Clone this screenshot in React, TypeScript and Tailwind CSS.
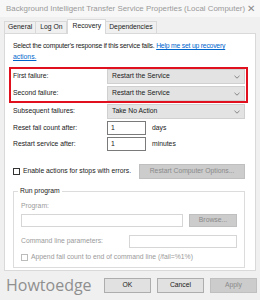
import React from "react";

const Chevron = () => (
  <svg width="6" height="4" viewBox="0 0 6 4" className="shrink-0">
    <path d="M0.5 0.8 L3 3.2 L5.5 0.8" fill="none" stroke="#6d6d6d" strokeWidth="0.8" />
  </svg>
);

const Select = ({ value }: { value: string }) => (
  <div className="w-[138px] h-[15px] bg-[#e3e3e3] border border-[#d0d0d0] flex items-center justify-between pl-[4px] pr-[4px] text-[#1a1a1a]">
    <span>{value}</span>
    <Chevron />
  </div>
);

const Box = () => <div className="w-[7px] h-[7px] border border-[#333] bg-white shrink-0" />;

export default function App() {
  return (
    <div className="w-[260px] h-[300px] bg-[#f0f0f0] overflow-hidden font-['Liberation_Sans',Arial,sans-serif] text-[6.8px] text-[#1a1a1a] leading-none">
      {/* title bar */}
      <div className="h-[17px] bg-[#f7f7f7] flex items-center justify-between pl-[6px] pr-[5px] text-[#9a9a9a] text-[7.9px]">
        <span className="whitespace-nowrap">Background Intelligent Transfer Service Properties (Local Computer)</span>
        <span className="shrink-0 text-[10px] text-[#8a8a8a] font-light">✕</span>
      </div>
      {/* tabs */}
      <div className="h-[16px] flex items-end pl-[4px] relative z-10">
        <div className="h-[12px] px-[3px] border border-b-0 border-[#d9d9d9] bg-[#f0f0f0] flex items-center">General</div>
        <div className="h-[12px] px-[4px] border border-b-0 border-l-0 border-[#d9d9d9] bg-[#f0f0f0] flex items-center">Log On</div>
        <div className="h-[15px] px-[4px] border border-b-0 border-[#d9d9d9] bg-white flex items-center -mb-[1px] pb-[2px]">Recovery</div>
        <div className="h-[12px] px-[3px] border border-b-0 border-l-0 border-[#d9d9d9] bg-[#f0f0f0] flex items-center">Dependencies</div>
      </div>
      {/* panel */}
      <div className="mx-[4px] h-[238px] border border-[#d9d9d9] bg-white px-[8px] flex flex-col">
        <div className="pt-[6px] leading-[11px]">
          <div className="whitespace-nowrap tracking-[-0.2px]">
            Select the computer's response if this service fails.{" "}
            <span className="text-[#0066cc] underline">Help me set up recovery</span>
          </div>
          <div className="text-[#0066cc] underline">actions.</div>
        </div>
        <div className="mt-[5px] -ml-[4px] w-[239px] h-[36px] border-2 border-[#e0101e] pl-[2px] pr-[1px] flex flex-col gap-[2px]">
          <div className="h-[15px] flex items-center justify-between">
            <span>First failure:</span>
            <Select value="Restart the Service" />
          </div>
          <div className="h-[15px] flex items-center justify-between">
            <span>Second failure:</span>
            <Select value="Restart the Service" />
          </div>
        </div>
        <div className="mt-[1px] h-[15px] flex items-center justify-between pr-[2px]">
          <span>Subsequent failures:</span>
          <Select value="Take No Action" />
        </div>
        <div className="mt-[2px] h-[14px] flex items-center">
          <span className="w-[94px]">Reset fail count after:</span>
          <div className="w-[39px] h-[14px] border border-[#7a7a7a] flex items-center pl-[3px]">1</div>
          <span className="ml-[6px]">days</span>
        </div>
        <div className="mt-[2px] h-[14px] flex items-center">
          <span className="w-[94px]">Restart service after:</span>
          <div className="w-[39px] h-[14px] border border-[#7a7a7a] flex items-center pl-[3px]">1</div>
          <span className="ml-[6px]">minutes</span>
        </div>
        <div className="mt-[13px] h-[15px] flex items-center justify-between pr-[2px]">
          <div className="flex items-center gap-[3px]">
            <Box />
            <span>Enable actions for stops with errors.</span>
          </div>
          <div className="w-[106px] h-[15px] bg-[#cccccc] border border-[#bfbfbf] flex items-center justify-center text-[#8a8a8a]">
            Restart Computer Options...
          </div>
        </div>
        <div className="mt-[12px] mr-[2px] h-[77px] border border-[#dcdcdc] relative px-[7px] flex flex-col">
          <span className="absolute -top-[4px] left-[4px] bg-white px-[2px]">Run program</span>
          <div className="mt-[11px] text-[#9a9a9a]">Program:</div>
          <div className="mt-[4px] flex items-center justify-between h-[13px]">
            <div className="w-[162px] h-[13px] border border-[#d6d6d6]" />
            <div className="w-[48px] h-[13px] bg-[#cccccc] border border-[#bfbfbf] flex items-center justify-center text-[#8a8a8a]">Browse...</div>
          </div>
          <div className="mt-[8px] flex items-center justify-between h-[13px]">
            <span className="text-[#9a9a9a]">Command line parameters:</span>
            <div className="w-[108px] h-[13px] border border-[#d6d6d6]" />
          </div>
          <div className="mt-[6px] flex items-center gap-[3px] text-[#9a9a9a]">
            <div className="w-[7px] h-[7px] border border-[#bcbcbc] bg-white shrink-0" />
            <span>Append fail count to end of command line (/fail=%1%)</span>
          </div>
        </div>
      </div>
      {/* bottom */}
      <div className="h-[29px] flex items-center pl-[6px] pr-[3px]">
        <span className="text-[16px] text-[#8f8f8f] font-['Open_Sans',sans-serif] w-[99px] -mt-[2px]">Howtoedge</span>
        <div className="flex gap-[6px]">
          <div className="w-[47px] h-[15px] bg-[#e1e1e1] border border-[#adadad] flex items-center justify-center">OK</div>
          <div className="w-[47px] h-[15px] bg-[#e1e1e1] border border-[#adadad] flex items-center justify-center">Cancel</div>
          <div className="w-[47px] h-[15px] bg-[#cccccc] border border-[#bfbfbf] flex items-center justify-center text-[#8a8a8a]">Apply</div>
        </div>
      </div>
    </div>
  );
}
